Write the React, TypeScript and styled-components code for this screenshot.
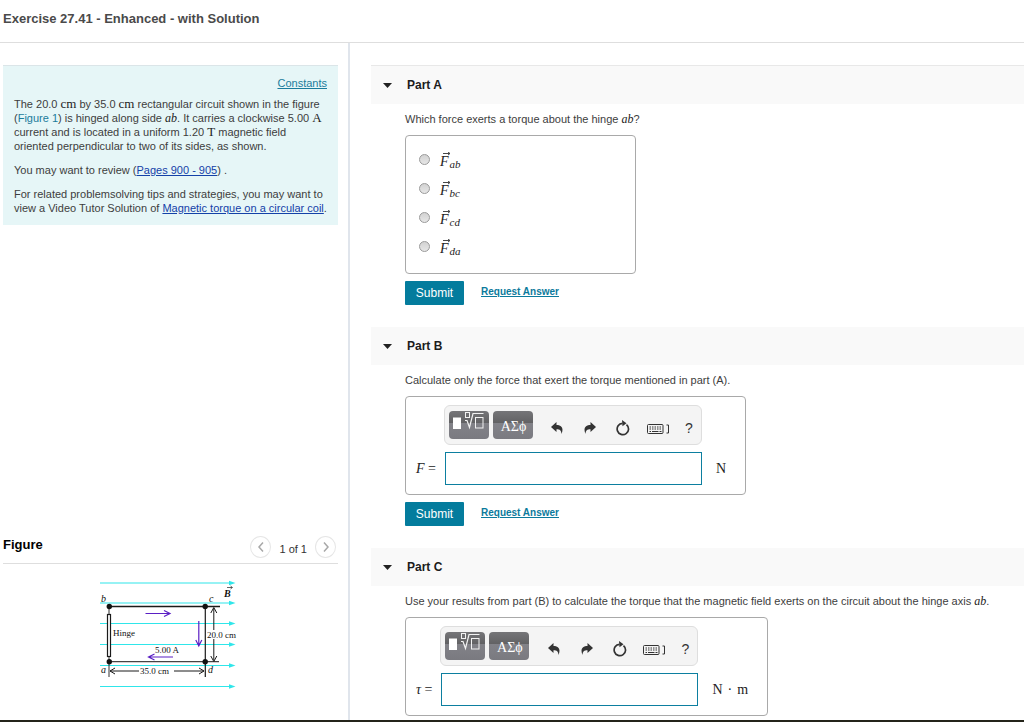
import React from "react";
import styled, { createGlobalStyle } from "styled-components";

const sans = `"Liberation Sans", Arial, Helvetica, sans-serif`;
const serif = `"Liberation Serif", "Times New Roman", serif`;

const GlobalStyle = createGlobalStyle`
  *, *::before, *::after { box-sizing: border-box; }
  body {
    margin: 0;
    background: #fff;
    color: #3d3d3d;
    font-family: ${sans};
    font-size: 11px;
    line-height: 14px;
  }
  h1, h2, h3, p, fieldset { margin: 0; padding: 0; }
  button, input { font-family: inherit; }
`;

const Page = styled.div`
  min-height: 100vh;
  display: flex;
  flex-direction: column;
`;

const TitleBar = styled.header`
  padding: 10px 3px 14px;
  border-bottom: 1px solid #dedede;
`;

const Title = styled.h1`
  font-size: 13px;
  line-height: 18px;
  color: #4a4a4a;
`;

const Columns = styled.div`
  flex: 1;
  display: grid;
  grid-template-columns: 350px minmax(0, 1fr);
`;

const BottomEdge = styled.footer`
  height: 2px;
  background: #24241a;
`;

const Side = styled.aside`
  display: flex;
  flex-direction: column;
  justify-content: space-between;
  gap: 24px;
  padding: 22px 10px 20px 3px;
  border-right: 2px solid #e0e5ec;
`;

const Intro = styled.section`
  display: flex;
  flex-direction: column;
  gap: 10px;
  padding: 10px 11px;
  background: #e6f6f7;
  border-top: 1px solid #dbe5e8;
`;

const ConstantsLink = styled.a`
  align-self: flex-end;
  margin-bottom: -3px;
  color: #1b7c9c;
`;

const FigureLink = styled.a`
  color: #1b7c9c;
  text-decoration: none;
`;

const ReadingLink = styled.a`
  color: #1441a8;
`;

const MathText = styled.span<{ $italic?: boolean }>`
  font-family: ${serif};
  font-size: ${(p) => (p.$italic ? 12 : 13)}px;
  line-height: 12px;
  font-style: ${(p) => (p.$italic ? "italic" : "normal")};
  color: #222;
`;

const FigureHead = styled.div`
  display: flex;
  align-items: center;
  justify-content: space-between;
  padding: 0 2px 5px 0;
  border-bottom: 1px solid #dedede;
`;

const FigureTitle = styled.h2`
  padding-bottom: 4px;
  font-size: 13px;
  line-height: 18px;
  color: #000;
`;

const Pager = styled.div`
  display: flex;
  align-items: center;
  gap: 8px;
  color: #333;
`;

const PageCount = styled.span`
  padding-top: 3px;
`;

const PagerButton = styled.button`
  display: grid;
  place-items: center;
  width: 21px;
  height: 22px;
  padding: 0;
  border: 1px solid #e6e6e6;
  border-radius: 50%;
  background: #fff;
`;

const Drawing = styled.svg`
  display: block;
  margin: 6px auto 0;
  font-family: ${serif};
  font-size: 9px;
  fill: #111;
`;

const Content = styled.main`
  display: flex;
  flex-direction: column;
  gap: 22px;
  padding: 22px 0 4px 21px;
`;

const PartHead = styled.div<{ $first?: boolean }>`
  display: flex;
  align-items: center;
  gap: 15px;
  height: ${(p) => (p.$first ? 39 : 38)}px;
  padding-left: 12px;
  background: #f9f9f9;
  border-top: ${(p) => (p.$first ? "1px solid #e8e8e8" : "none")};
`;

const PartToggle = styled.button`
  display: flex;
  padding: 0;
  border: 0;
  background: none;
`;

const PartTitle = styled.h3`
  font-size: 12px;
  color: #1c1c1c;
`;

const PartBody = styled.div`
  padding: 8px 16px 0 34px;
`;

const Question = styled.p`
  margin-bottom: 8px;
  line-height: 15px;
`;

const ChoiceBox = styled.fieldset`
  width: 231px;
  padding: 9px 13px 12px;
  border: 1px solid #a9a9a9;
  border-radius: 4px;
`;

const Choice = styled.label`
  display: flex;
  align-items: center;
  gap: 10px;
  height: 29px;
`;

const Radio = styled.input`
  appearance: none;
  width: 11px;
  height: 11px;
  margin: 0;
  border: 1px solid #9a9a9a;
  border-radius: 50%;
  background: linear-gradient(#d2d2d2, #e6e6e6);
`;

const Vector = styled.span`
  position: relative;
  display: inline-flex;
  align-items: baseline;
  padding-top: 5px;
  font-family: ${serif};
  font-style: italic;
  font-size: 14px;
  line-height: 16px;
  color: #222;
`;

const VectorArrow = styled.svg`
  position: absolute;
  left: 3px;
  top: 3px;
`;

const Subscript = styled.span`
  position: relative;
  top: 2px;
  padding-left: 1px;
  font-size: 11px;
`;

const AnswerBox = styled.div`
  display: grid;
  grid-template-columns: auto 258px auto;
  align-items: center;
  row-gap: 7px;
  width: fit-content;
  height: 99px;
  padding: 8px 19px 9px 10px;
  border: 1px solid #a9a9a9;
  border-radius: 4px;
`;

const Toolbar = styled.div`
  grid-column: 2;
  display: flex;
  align-items: center;
  height: 40px;
  padding: 0 0 0 4px;
  background: #f4f4f4;
  border: 1px solid #dedede;
  border-radius: 6px;
`;

const PaletteButton = styled.button`
  display: grid;
  place-items: center;
  width: 40px;
  height: 28px;
  margin-right: 4px;
  padding: 0;
  border: 0;
  border-radius: 4px;
  background: linear-gradient(#757578, #626264 42%, #828288 43%, #7a7a80);
  color: #fff;
  font-family: ${serif};
  font-size: 14px;
  line-height: 14px;
`;

const Greek = styled.span`
  padding: 4px 0 0 1px;
`;

const ToolButton = styled.button<{ $width: number }>`
  display: grid;
  place-items: center;
  width: ${(p) => p.$width}px;
  height: 28px;
  padding: 6px 0 0;
  border: 0;
  background: none;
  color: #333;
  font-size: 14px;
  line-height: 22px;
`;

const ToolSpacer = styled.span`
  width: 4px;
`;

const Symbol = styled.label`
  grid-column: 1;
  padding-right: 8px;
  font-family: ${serif};
  font-size: 14px;
  color: #222;
`;

const AnswerInput = styled.input`
  grid-column: 2;
  width: 257px;
  height: 33px;
  margin: 0 0 0 1px;
  padding: 0 8px;
  border: 1px solid #0c7fa0;
  background: #fff;
  font-size: 14px;
`;

const Unit = styled.span`
  display: flex;
  gap: 5px;
  padding-left: 14px;
  font-family: ${serif};
  font-size: 14px;
  color: #222;
`;

const Actions = styled.div`
  display: flex;
  align-items: center;
  gap: 17px;
  margin-top: 7px;
`;

const SubmitButton = styled.button`
  width: 59px;
  height: 24px;
  padding: 0;
  border: 0;
  border-radius: 1px;
  background: #047c9d;
  color: #fff;
  font-size: 12px;
`;

const RequestLink = styled.a`
  padding-bottom: 2px;
  color: #0c7a9c;
  font-size: 10px;
  font-weight: bold;
`;

const Chevron = ({ d }: { d: string }) => (
  <svg width="8" height="12" viewBox="0 0 8 12" fill="none" stroke="#a8a8a8" strokeWidth="1.5">
    <path d={d} />
  </svg>
);

const RootIcon = () => (
  <svg width="40" height="28" viewBox="0 0 40 28" fill="none" stroke="#f2f2f2">
    <rect x="4" y="6.500" width="8" height="11.500" fill="#fff" stroke="none" />
    <rect x="16.500" y="1.500" width="4" height="5" />
    <path d="M16 9.500h2l2.500 7L24 2.500h10.500" strokeWidth="1.200" />
    <rect x="26.500" y="6.500" width="7.500" height="10.500" />
  </svg>
);

const bend = "M5.500 0v3C10.500 3.200 13 6 10.500 12 10.300 8.500 9 7.200 5.500 7.200V10L0 5z";

const UndoIcon = () => (
  <svg width="12" height="12" viewBox="0 0 12 12" fill="currentColor">
    <path d={bend} />
  </svg>
);

const RedoIcon = () => (
  <svg width="12" height="12" viewBox="0 0 12 12" fill="currentColor">
    <path d={bend} transform="matrix(-1 0 0 1 12 0)" />
  </svg>
);

const ResetIcon = () => (
  <svg width="14" height="16" viewBox="0 0 14 16" fill="none" stroke="currentColor" strokeWidth="1.700">
    <path d="M10.500 4.600A5.700 5.700 0 1 1 6.500 3.300" />
    <path d="M6 0l4.500 3.200L6.500 6.200z" fill="currentColor" stroke="none" />
  </svg>
);

const KeyboardIcon = () => (
  <svg width="24" height="12" viewBox="0 0 24 12" fill="none" stroke="currentColor">
    <rect x="0.500" y="2.500" width="15.500" height="9" rx="1" />
    <path d="M2.500 5h12M2.500 7h12" strokeDasharray="1.500 1" />
    <path d="M2.500 9.500h1.500M5 9.500h6.500M12.500 9.500h2" />
    <path d="M19.500 3h2v8h-2" />
  </svg>
);

const ForceVector = ({ sub }: { sub: string }) => (
  <Vector>
    F
    <VectorArrow width="8" height="5" viewBox="0 0 8 5" fill="none" stroke="#333" strokeWidth="0.900">
      <path d="M0 1.500h6.500M5 0l2 1.500-2 1.500" />
    </VectorArrow>
    <Subscript>{sub}</Subscript>
  </Vector>
);

const CircuitDrawing = () => (
  <Drawing width="160" height="130" viewBox="0 0 160 130" role="img" aria-label="Rectangular circuit in a magnetic field">
    {[13, 33, 53.5, 74.5, 95.5, 116.5].map((y) => (
      <g key={y} stroke="#2fe6ea" fill="#2fe6ea">
        <path d={`M9 ${y}H140`} fill="none" strokeWidth="1.200" />
        <path d={`M138 ${y - 2.2}l6.500 2.200-6.500 2.200z`} stroke="none" />
      </g>
    ))}
    <g fill="none" stroke="#1a1a1a">
      <path d="M18 36.500H129" strokeWidth="1.300" />
      <path d="M18 91.700H128" stroke="#444" strokeWidth="1.300" />
      <path d="M114.300 36v71" strokeWidth="1.200" />
      <path d="M18 36v71" strokeWidth="0.900" />
      <rect x="16.500" y="44.500" width="3" height="42" fill="#fff" strokeWidth="1.200" />
      <path d="M122.800 38v52M119.800 43l3-5.500 3 5.500M119.800 86l3 5.500 3-5.500" />
      <path d="M19 101H48M83 101h30M24 98l-5 3 5 3M108 98l5 3-5 3" />
    </g>
    <g fill="none" stroke="#5a1fc4" strokeWidth="1.200">
      <path d="M54.500 43.500h24M73 40.500l6 3-6 3" />
      <path d="M107.800 51v24M104.800 70l3 6 3-6" />
      <path d="M82 87H58M63.500 84l-6 3 6 3" />
    </g>
    <g>
      <circle cx="18.300" cy="36.500" r="2.700" />
      <circle cx="114.200" cy="36.500" r="2.700" />
      <circle cx="18.300" cy="91.800" r="2.700" />
      <circle cx="114.200" cy="91.800" r="2.700" />
    </g>
    <text x="22" y="66">Hinge</text>
    <text x="64" y="83">5.00 A</text>
    <text x="49" y="104">35.0 cm</text>
    <rect x="121" y="60" width="4" height="9" fill="#fff" />
    <text x="116" y="68">20.0 cm</text>
    <g fontStyle="italic" fontSize="10">
      <text x="10" y="32">b</text>
      <text x="118" y="32">c</text>
      <text x="10" y="103">a</text>
      <text x="117" y="103">d</text>
      <text x="133" y="27" fontWeight="bold">B</text>
    </g>
    <path d="M136 17.500h5M139.500 16l2 1.500-2 1.500" fill="none" stroke="#222" strokeWidth="0.700" />
  </Drawing>
);

const SubmitRow = () => (
  <Actions>
    <SubmitButton type="submit">Submit</SubmitButton>
    <RequestLink href="#answer">Request Answer</RequestLink>
  </Actions>
);

type PartProps = { name: string; first?: boolean; children: React.ReactNode };

const Part = ({ name, first, children }: PartProps) => (
  <section>
    <PartHead $first={first}>
      <PartToggle type="button" aria-label={`Collapse ${name}`}>
        <svg width="9" height="5" viewBox="0 0 9 5" fill="#222">
          <path d="M0 0h9L4.500 5z" />
        </svg>
      </PartToggle>
      <PartTitle>{name}</PartTitle>
    </PartHead>
    <PartBody>{children}</PartBody>
  </section>
);

type AnswerProps = { id: string; symbol: React.ReactNode; unit: string[] };

const Answer = ({ id, symbol, unit }: AnswerProps) => (
  <AnswerBox>
    <Toolbar role="toolbar" aria-label="Equation tools">
      <PaletteButton type="button" aria-label="Templates">
        <RootIcon />
      </PaletteButton>
      <PaletteButton type="button" aria-label="Symbols">
        <Greek>ΑΣϕ</Greek>
      </PaletteButton>
      <ToolSpacer />
      <ToolButton $width={33} type="button" aria-label="Undo">
        <UndoIcon />
      </ToolButton>
      <ToolButton $width={33} type="button" aria-label="Redo">
        <RedoIcon />
      </ToolButton>
      <ToolButton $width={33} type="button" aria-label="Reset">
        <ResetIcon />
      </ToolButton>
      <ToolButton $width={38} type="button" aria-label="Keyboard shortcuts">
        <KeyboardIcon />
      </ToolButton>
      <ToolButton $width={22} type="button" aria-label="Help">
        ?
      </ToolButton>
    </Toolbar>
    <Symbol htmlFor={id}>
      <i>{symbol}</i> =
    </Symbol>
    <AnswerInput id={id} type="text" />
    <Unit>
      {unit.map((u) => (
        <span key={u}>{u}</span>
      ))}
    </Unit>
  </AnswerBox>
);

export default function App() {
  return (
    <Page>
      <GlobalStyle />
      <TitleBar>
        <Title>Exercise 27.41 - Enhanced - with Solution</Title>
      </TitleBar>
      <Columns>
        <Side>
          <Intro>
            <ConstantsLink href="#constants">Constants</ConstantsLink>
            <p>
              The 20.0 <MathText>cm</MathText> by 35.0 <MathText>cm</MathText> rectangular circuit shown in the
              figure (<FigureLink href="#figure">Figure 1</FigureLink>) is hinged along side{" "}
              <MathText $italic>ab</MathText>. It carries a clockwise 5.00 <MathText>A</MathText> current and is
              located in a uniform 1.20 <MathText>T</MathText> magnetic field oriented perpendicular to two of its
              sides, as shown.
            </p>
            <p>
              You may want to review (<ReadingLink href="#pages">Pages 900 - 905</ReadingLink>) .
            </p>
            <p>
              For related problemsolving tips and strategies, you may want to view a Video Tutor Solution of{" "}
              <ReadingLink href="#video">Magnetic torque on a circular coil</ReadingLink>.
            </p>
          </Intro>
          <section id="figure">
            <FigureHead>
              <FigureTitle>Figure</FigureTitle>
              <Pager>
                <PagerButton type="button" aria-label="Previous figure">
                  <Chevron d="M6 1.500L2 6l4 4.500" />
                </PagerButton>
                <PageCount>1 of 1</PageCount>
                <PagerButton type="button" aria-label="Next figure">
                  <Chevron d="M2 1.500L6 6l-4 4.500" />
                </PagerButton>
              </Pager>
            </FigureHead>
            <CircuitDrawing />
          </section>
        </Side>
        <Content>
          <Part name="Part A" first>
            <Question id="question-a">
              Which force exerts a torque about the hinge <MathText $italic>ab</MathText>?
            </Question>
            <ChoiceBox aria-labelledby="question-a">
              {["ab", "bc", "cd", "da"].map((sub) => (
                <Choice key={sub}>
                  <Radio type="radio" name="force" value={sub} />
                  <ForceVector sub={sub} />
                </Choice>
              ))}
            </ChoiceBox>
            <SubmitRow />
          </Part>
          <Part name="Part B">
            <Question>Calculate only the force that exert the torque mentioned in part (A).</Question>
            <Answer id="force" symbol="F" unit={["N"]} />
            <SubmitRow />
          </Part>
          <Part name="Part C">
            <Question>
              Use your results from part (B) to calculate the torque that the magnetic field exerts on the circuit
              about the hinge axis <MathText $italic>ab</MathText>.
            </Question>
            <Answer id="torque" symbol="τ" unit={["N", "·", "m"]} />
          </Part>
        </Content>
      </Columns>
      <BottomEdge />
    </Page>
  );
}
